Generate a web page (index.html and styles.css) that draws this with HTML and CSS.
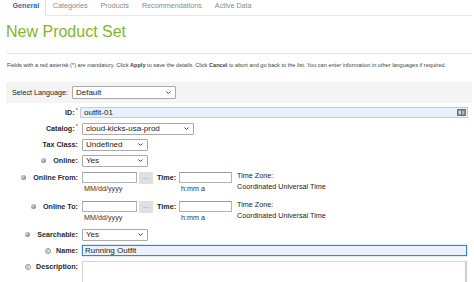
FILE: index.html
```html
<!DOCTYPE html>
<html lang="en">
<head>
  <meta charset="UTF-8" />
  <meta name="viewport" content="width=device-width, initial-scale=1" />
  <title>New Product Set</title>
  <link rel="stylesheet" href="styles.css">
</head>
<body>

  <div class="tabs">
    <a class="tab active" href="#">General</a>
    <a class="tab" href="#">Categories</a>
    <a class="tab" href="#">Products</a>
    <a class="tab" href="#">Recommendations</a>
    <a class="tab" href="#">Active Data</a>
  </div>

  <h1 class="title">New Product Set</h1>
  <hr class="rule">

  <p class="help">Fields with a red asterisk (*) are mandatory. Click <b>Apply</b> to save the details. Click <b>Cancel</b> to abort and go back to the list. You can enter information in other languages if required.</p>

  <div class="lang-bar">
    <label>Select Language:</label>
    <span class="select-wrap w-lang">
      <select><option>Default</option></select>
      <svg class="chev" width="5" height="3" viewBox="0 0 5 3"><polyline points="0.5,0.5 2.5,2.5 4.5,0.5" fill="none" stroke="#333" stroke-width="0.9"/></svg>
    </span>
  </div>

  <div class="form">
    <label class="lbl">ID:<span class="req">*</span></label>
    <div class="field">
      <span class="input-wrap">
        <input class="text wide autofill" value="outfit-01">
        <svg class="field-icon" width="9" height="7" viewBox="0 0 9 7"><rect width="9" height="7" rx="1" fill="#6d6d6d"/><rect x="1.5" y="1.5" width="2.5" height="4" fill="#d8d8d8"/><rect x="5" y="1.5" width="2.5" height="4" fill="#b8b8b8"/></svg>
      </span>
    </div>

    <label class="lbl">Catalog:<span class="req">*</span></label>
    <div class="field">
      <span class="select-wrap w-catalog">
        <select><option>cloud-kicks-usa-prod</option></select>
        <svg class="chev" width="5" height="3" viewBox="0 0 5 3"><polyline points="0.5,0.5 2.5,2.5 4.5,0.5" fill="none" stroke="#333" stroke-width="0.9"/></svg>
      </span>
    </div>

    <label class="lbl">Tax Class:</label>
    <div class="field">
      <span class="select-wrap w-short">
        <select><option>Undefined</option></select>
        <svg class="chev" width="5" height="3" viewBox="0 0 5 3"><polyline points="0.5,0.5 2.5,2.5 4.5,0.5" fill="none" stroke="#333" stroke-width="0.9"/></svg>
      </span>
    </div>

    <label class="lbl"><span class="dot"></span>Online:</label>
    <div class="field">
      <span class="select-wrap w-short">
        <select><option>Yes</option></select>
        <svg class="chev" width="5" height="3" viewBox="0 0 5 3"><polyline points="0.5,0.5 2.5,2.5 4.5,0.5" fill="none" stroke="#333" stroke-width="0.9"/></svg>
      </span>
    </div>

    <label class="lbl date-row"><span class="dot"></span>Online From:</label>
    <div class="field date-row">
      <div class="stack">
        <input class="text date">
        <span class="hint">MM/dd/yyyy</span>
      </div>
      <button class="pick">...</button>
      <span class="time-lbl">Time:</span>
      <div class="stack">
        <input class="text time">
        <span class="hint">h:mm a</span>
      </div>
      <div class="zone">Time Zone:<br>Coordinated Universal Time</div>
    </div>

    <label class="lbl date-row"><span class="dot"></span>Online To:</label>
    <div class="field date-row">
      <div class="stack">
        <input class="text date">
        <span class="hint">MM/dd/yyyy</span>
      </div>
      <button class="pick">...</button>
      <span class="time-lbl">Time:</span>
      <div class="stack">
        <input class="text time">
        <span class="hint">h:mm a</span>
      </div>
      <div class="zone">Time Zone:<br>Coordinated Universal Time</div>
    </div>

    <label class="lbl"><span class="dot"></span>Searchable:</label>
    <div class="field">
      <span class="select-wrap w-short">
        <select><option>Yes</option></select>
        <svg class="chev" width="5" height="3" viewBox="0 0 5 3"><polyline points="0.5,0.5 2.5,2.5 4.5,0.5" fill="none" stroke="#333" stroke-width="0.9"/></svg>
      </span>
    </div>

    <label class="lbl"><svg class="globe" width="6" height="6" viewBox="0 0 6 6"><circle cx="3" cy="3" r="2.5" fill="none" stroke="#777" stroke-width="0.8"/><path d="M4 2.1 A1.2 1.2 0 1 0 4 3.9" fill="none" stroke="#777" stroke-width="0.7"/></svg>Name:</label>
    <div class="field">
      <input class="text wide focused" value="Running Outfit">
    </div>

    <label class="lbl"><svg class="globe" width="6" height="6" viewBox="0 0 6 6"><circle cx="3" cy="3" r="2.5" fill="none" stroke="#777" stroke-width="0.8"/><path d="M4 2.1 A1.2 1.2 0 1 0 4 3.9" fill="none" stroke="#777" stroke-width="0.7"/></svg>Description:</label>
    <div class="field">
      <textarea class="desc"></textarea>
    </div>
  </div>

</body>
</html>
```

FILE: styles.css
```css
html, body {
  overflow: hidden;
}

body {
  margin: 0;
  font-family: "Liberation Sans", Arial, sans-serif;
  font-size: 7.2px;
  color: #222;
  background: #fff;
}

.tabs {
  display: flex;
  margin: 0 2px 0 6px;
  height: 15px;
  border-bottom: 1px solid #e6e6e6;
}

.tab {
  padding: 0 6.5px;
  line-height: 12px;
  color: #8a8a8a;
  text-decoration: none;
}

.tab.active {
  color: #2f6aa8;
  font-weight: bold;
  background: #fff;
  border-right: 1px solid #e2e2e2;
  border-bottom: 1px solid #fff;
  margin-bottom: -1px;
  padding-right: 6px;
}

.title {
  margin: 5.5px 0 0 6px;
  font-size: 16px;
  line-height: 20px;
  font-weight: normal;
  color: #7fb62a;
}

.rule {
  margin: 11px 2px 0 6px;
  border: 0;
  border-top: 1px solid #e4e4e4;
}

.help {
  margin: 7px 0 0 7px;
  font-size: 5.6px;
  line-height: 8px;
  color: #444;
}

.lang-bar {
  display: flex;
  align-items: center;
  gap: 4px;
  margin: 13px 2px 0 6px;
  height: 21px;
  padding-left: 6px;
  background: #f4f4f4;
}

.select-wrap {
  position: relative;
  display: inline-block;
  height: 12px;
}

.select-wrap select {
  appearance: none;
  -webkit-appearance: none;
  width: 100%;
  height: 12px;
  margin: 0;
  padding: 0 0 0 3px;
  border: 1px solid #a9a9a9;
  border-radius: 1px;
  background: #fff;
  font-family: inherit;
  font-size: 8px;
  color: #222;
}

.lang-bar .select-wrap,
.lang-bar select {
  height: 13px;
}

.chev {
  position: absolute;
  right: 5px;
  top: 50%;
  margin-top: -1.5px;
}

.w-lang { width: 104px; }
.w-catalog { width: 112px; }
.w-short { width: 66px; }

.form {
  display: grid;
  grid-template-columns: 72px 1fr;
  column-gap: 4px;
  row-gap: 4px;
  align-items: start;
  margin: 4px 6px 0 6px;
}

.lbl {
  display: flex;
  align-items: center;
  justify-content: flex-end;
  height: 12px;
  font-weight: bold;
  color: #2a2a2a;
}

.req {
  align-self: flex-start;
  margin-left: 1px;
  color: #e02020;
  font-weight: normal;
  font-size: 6px;
  line-height: 6px;
}

.dot {
  width: 5px;
  height: 5px;
  margin-right: 7px;
  border-radius: 50%;
  background: radial-gradient(circle at 35% 35%, #d6d6d6, #8c8c8c 70%, #777);
}

.globe {
  margin-right: 5px;
}

.field {
  display: flex;
  align-items: flex-start;
}

.date-row {
  padding-top: 1px;
}

.input-wrap {
  position: relative;
  display: block;
  width: 100%;
}

.text {
  box-sizing: border-box;
  height: 11px;
  margin: 0;
  padding: 0 0 0 3px;
  border: 1px solid #b4b4b4;
  border-top-color: #9c9c9c;
  background: #fff;
  font-family: inherit;
  font-size: 8px;
  color: #222;
}

.wide {
  width: 100%;
}

.autofill {
  margin-left: -2px;
  width: calc(100% + 2px);
  background: #e8f0fe;
  border-color: #c8ccd4;
}

.field-icon {
  position: absolute;
  right: 2px;
  top: 2px;
}

.focused {
  width: calc(100% - 1px);
  padding-left: 2px;
  border: 1px solid #3f80cf;
  box-shadow: 0 0 1px #3f80cf;
  background: #ebf2fd;
  outline: none;
}

.stack {
  display: flex;
  flex-direction: column;
}

.hint {
  line-height: 11px;
  margin: 0 0 2px 2px;
  color: #333;
}

.date {
  width: 55px;
}

.time {
  width: 53px;
}

.pick {
  width: 14px;
  height: 12px;
  margin: 0 4px 0 2px;
  padding: 0 0 2px;
  border: 0;
  background: #e0e0e0;
  color: #8a8a8a;
  font-family: inherit;
  font-size: 7px;
  line-height: 10px;
}

.time-lbl {
  margin-right: 3px;
  line-height: 11px;
  font-weight: bold;
}

.zone {
  margin: -2px 0 0 5px;
  line-height: 11px;
}

.desc {
  box-sizing: border-box;
  display: block;
  width: calc(100% - 1px);
  height: 34px;
  margin: 0;
  border: 1px solid #d2d2d2;
  border-right: 2px solid #cfcfcf;
  resize: none;
}
```
